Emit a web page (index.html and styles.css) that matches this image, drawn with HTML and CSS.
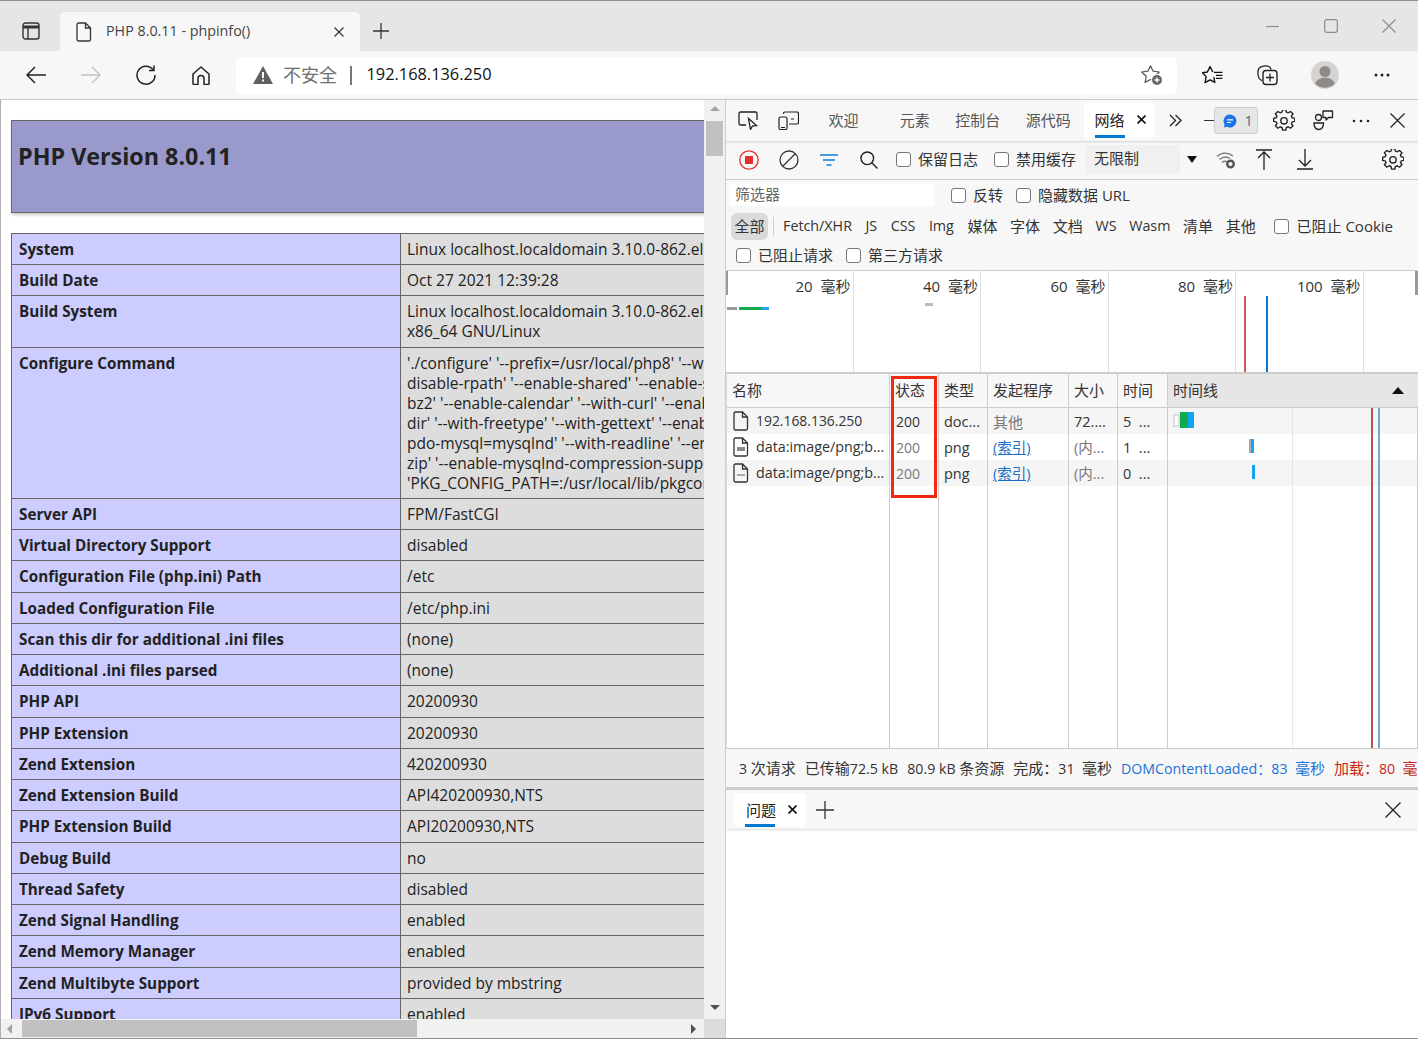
FILE: index.html
```html
<!DOCTYPE html>
<html lang="zh-CN">
<head>
<meta charset="utf-8">
<title>PHP 8.0.11 - phpinfo()</title>
<link rel="stylesheet" href="styles.css">
</head>
<body>
<svg class="defs" width="0" height="0">
  <symbol id="gear" viewBox="0 0 22 22"><path d="M9.2 1.2h3.6l.6 2.8 1.7.8 2.5-1.500 2.400 2.600-1.600 2.400.7 1.700 2.700.6v3.400l-2.700.6-.7 1.700 1.600 2.400-2.400 2.600-2.500-1.500-1.700.8-.6 2.800H9.200" transform="translate(0 -1.600) scale(1 .93)" fill="none" stroke="#222" stroke-width="1.400"/><path d="M9.200 1.200l-.6 2.800-1.700.8-2.500-1.500-2.400 2.600 1.600 2.400-.7 1.700-2.700.6v3.400l2.700.6.7 1.700-1.600 2.400 2.400 2.600 2.500-1.500 1.700.8.6 2.800" transform="translate(0.400 -1.600) scale(1 .93)" fill="none" stroke="#222" stroke-width="1.400"/><circle cx="11" cy="10.800" r="3.200" fill="none" stroke="#222" stroke-width="1.400"/></symbol>
  <symbol id="file" viewBox="0 0 16 20"><path d="M2.500 1h7l5 5v11.500a1.500 1.500 0 0 1-1.500 1.500H2.500A1.500 1.500 0 0 1 1 17.500V2.500A1.500 1.500 0 0 1 2.500 1zM9.500 1v5h5" fill="none" stroke="#333" stroke-width="1.300"/></symbol>
</svg>

<header class="tabstrip">
  <svg class="ico side" width="18" height="18" viewBox="0 0 18 18"><rect x="1" y="1" width="16" height="16" rx="2.500" fill="none" stroke="#333" stroke-width="1.400"/><path d="M1 5h16" stroke="#333" stroke-width="3"/><path d="M6 5v12" stroke="#333" stroke-width="1.400"/></svg>
  <div class="tab">
    <svg width="16" height="20" viewBox="0 0 16 20"><use href="#file"/></svg>
    <span class="tab-title">PHP 8.0.11 - phpinfo()</span>
    <svg class="tab-x" width="10" height="10" viewBox="0 0 10 10"><path d="M.5.500l9 9M9.500.500l-9 9" stroke="#333" stroke-width="1.200"/></svg>
  </div>
  <svg class="newtab" width="18" height="18" viewBox="0 0 18 18"><path d="M9 1v16M1 9h16" stroke="#333" stroke-width="1.300"/></svg>
  <div class="winctl">
    <svg width="14" height="14" viewBox="0 0 14 14"><path d="M0 7.500h13" stroke="#8c8c8c" stroke-width="1.200"/></svg>
    <svg width="14" height="14" viewBox="0 0 14 14"><rect x=".7" y=".7" width="12.600" height="12.600" rx="2" fill="none" stroke="#8c8c8c" stroke-width="1.200"/></svg>
    <svg width="14" height="14" viewBox="0 0 14 14"><path d="M.5.500l13 13M13.500.500l-13 13" stroke="#8c8c8c" stroke-width="1.200"/></svg>
  </div>
</header>

<nav class="toolbar">
  <svg class="tb back" width="20" height="18" viewBox="0 0 20 18"><path d="M20 9H1M9 1L1 9l8 8" fill="none" stroke="#222" stroke-width="1.500"/></svg>
  <svg class="tb fwd" width="20" height="18" viewBox="0 0 20 18"><path d="M0 9h19M11 1l8 8-8 8" fill="none" stroke="#c4c4c4" stroke-width="1.500"/></svg>
  <svg class="tb reload" width="20" height="20" viewBox="0 0 20 20"><path d="M17 4.500A9 9 0 1 0 19 10" fill="none" stroke="#222" stroke-width="1.500"/><path d="M18 .5v5h-5" fill="none" stroke="#222" stroke-width="1.500"/></svg>
  <svg class="tb home" width="18" height="19" viewBox="0 0 18 19"><path d="M9 1L1 8v9.500a1 1 0 0 0 1 1h4v-6a3 3 0 0 1 6 0v6h4a1 1 0 0 0 1-1V8z" fill="none" stroke="#222" stroke-width="1.500" stroke-linejoin="round"/></svg>
  <div class="addr">
    <svg width="20" height="18" viewBox="0 0 20 18"><path d="M10 0l10 18H0z" fill="#606060"/><path d="M9 6h2v6H9zM9 13.500h2v2H9z" fill="#fff"/></svg>
    <span class="insecure">不安全</span>
    <span class="sep"></span>
    <span class="url">192.168.136.250</span>
    <svg class="starplus" width="22" height="21" viewBox="0 0 22 21"><path d="M9.500.8l2.600 5.400 6.200.8-4.500 4.300 1.100 6.100-5.400-2.900-5.400 2.900 1.100-6.100L.7 7l6.200-.8z" fill="none" stroke="#555" stroke-width="1.200" stroke-linejoin="round"/><circle cx="16" cy="15" r="6" fill="#fff"/><circle cx="16" cy="15" r="5" fill="#666"/><path d="M16 12.500v5M13.500 15h5" stroke="#fff" stroke-width="1.400"/></svg>
  </div>
  <svg class="tb favs" width="21" height="20" viewBox="0 0 21 20"><path d="M10.800 7L8 1.500 5.400 7l-4.900.7 3.600 3.900-1 6 5-2.800 4.700 2.600-.9-5.200" fill="none" stroke="#111" stroke-width="1.400" stroke-linejoin="round"/><path d="M12 7.300h8.500M14 10.300h6.500M14 13.300h6.500" stroke="#111" stroke-width="1.200"/></svg>
  <svg class="tb coll" width="21" height="21" viewBox="0 0 21 21"><path d="M5 15.500C2.500 15 1.500 13 1 9.500.500 5 1 3 4 1.800 7 .8 10 .6 12 1.500c1.200.6 1.700 1.500 2 3" fill="none" stroke="#222" stroke-width="1.300"/><rect x="6" y="5.500" width="14" height="14" rx="3" fill="none" stroke="#222" stroke-width="1.400"/><path d="M13 8.500v8M9 12.500h8" stroke="#222" stroke-width="1.300"/></svg>
  <svg class="tb avatar" width="28" height="28" viewBox="0 0 28 28"><circle cx="14" cy="14" r="14" fill="#d6d4d2"/><circle cx="14" cy="10.500" r="5.500" fill="#8f8b86"/><path d="M4.500 23a9.500 6.500 0 0 1 19 0 14 14 0 0 1-19 0z" fill="#8f8b86"/></svg>
  <svg class="tb dots" width="16" height="4" viewBox="0 0 16 4"><circle cx="2" cy="2" r="1.500" fill="#222"/><circle cx="8" cy="2" r="1.500" fill="#222"/><circle cx="14" cy="2" r="1.500" fill="#222"/></svg>
</nav>

<main class="content">
  <section class="pane">
    <div class="pane-top">
      <div class="viewport">
        <div class="phpdoc">
          <div class="banner"><h1>PHP Version 8.0.11</h1></div>
          <table class="info">
            <tr><th>System</th><td>Linux localhost.localdomain 3.10.0-862.el7.x86_64 #1 SMP Fri Apr 20 16:44:24 UTC 2018</td></tr>
            <tr><th>Build Date</th><td>Oct 27 2021 12:39:28</td></tr>
            <tr><th>Build System</th><td>Linux localhost.localdomain 3.10.0-862.el7.x86_64 #1 SMP Fri Apr 20 16:44:24 UTC 2018<br>x86_64 GNU/Linux</td></tr>
            <tr><th>Configure Command</th><td>'./configure' '--prefix=/usr/local/php8' '--with-config-file-path=/etc' '--enable-fpm'<br>disable-rpath' '--enable-shared' '--enable-soap' '--with-libxml' '--with-openssl'<br>bz2' '--enable-calendar' '--with-curl' '--enable-gd' '--with-jpeg' '--with-zlib'<br>dir' '--with-freetype' '--with-gettext' '--enable-mbstring' '--with-mysqli=mysqlnd'<br>pdo-mysql=mysqlnd' '--with-readline' '--enable-shmop' '--enable-sockets' '--with-<br>zip' '--enable-mysqlnd-compression-support' '--with-pear' '--enable-opcache'<br>'PKG_CONFIG_PATH=:/usr/local/lib/pkgconfig'</td></tr>
            <tr><th>Server API</th><td>FPM/FastCGI</td></tr>
            <tr><th>Virtual Directory Support</th><td>disabled</td></tr>
            <tr><th>Configuration File (php.ini) Path</th><td>/etc</td></tr>
            <tr><th>Loaded Configuration File</th><td>/etc/php.ini</td></tr>
            <tr><th>Scan this dir for additional .ini files</th><td>(none)</td></tr>
            <tr><th>Additional .ini files parsed</th><td>(none)</td></tr>
            <tr><th>PHP API</th><td>20200930</td></tr>
            <tr><th>PHP Extension</th><td>20200930</td></tr>
            <tr><th>Zend Extension</th><td>420200930</td></tr>
            <tr><th>Zend Extension Build</th><td>API420200930,NTS</td></tr>
            <tr><th>PHP Extension Build</th><td>API20200930,NTS</td></tr>
            <tr><th>Debug Build</th><td>no</td></tr>
            <tr><th>Thread Safety</th><td>disabled</td></tr>
            <tr><th>Zend Signal Handling</th><td>enabled</td></tr>
            <tr><th>Zend Memory Manager</th><td>enabled</td></tr>
            <tr><th>Zend Multibyte Support</th><td>provided by mbstring</td></tr>
            <tr><th>IPv6 Support</th><td>enabled</td></tr>
          </table>
        </div>
      </div>
      <div class="vbar">
        <span class="arrow-up"></span>
        <span class="vthumb"></span>
        <span class="arrow-down"></span>
      </div>
    </div>
    <div class="hbar">
      <div class="htrack">
        <span class="arrow-left"></span>
        <span class="hthumb"></span>
        <span class="arrow-right"></span>
      </div>
      <span class="hcorner"></span>
    </div>
  </section>

  <section class="devtools">
    <div class="dt-tabs">
      <svg class="dt-ico inspect" width="21" height="19" viewBox="0 0 21 19"><path d="M8 14H2.500A1.500 1.500 0 0 1 1 12.500v-10A1.500 1.500 0 0 1 2.500 1h15A1.500 1.500 0 0 1 19 2.500V9" fill="none" stroke="#222" stroke-width="1.300"/><path d="M10.500 7.500l2 11 2-3.500 4-.5z" fill="none" stroke="#222" stroke-width="1.300"/></svg>
      <svg class="dt-ico device" width="21" height="19" viewBox="0 0 21 19"><path d="M5.500 3V2.500A1.500 1.500 0 0 1 7 1h12a1.500 1.500 0 0 1 1.500 1.500v9A1.500 1.500 0 0 1 19 13h-8" fill="none" stroke="#222" stroke-width="1.200"/><rect x="1" y="6" width="8" height="12.500" rx="1.500" fill="none" stroke="#222" stroke-width="1.200"/><path d="M3 16.500h4M13 8h3" stroke="#222" stroke-width="1.100"/></svg>
      <span class="dt-tab welcome">欢迎</span>
      <span class="dt-tab">元素</span>
      <span class="dt-tab">控制台</span>
      <span class="dt-tab">源代码</span>
      <span class="dt-tab-active"><span class="dt-active-label">网络</span><svg width="9" height="9" viewBox="0 0 9 9"><path d="M.5.500l8 8M8.500.500l-8 8" stroke="#111" stroke-width="1.600"/></svg></span>
      <svg class="more" width="13" height="13" viewBox="0 0 13 13"><path d="M1 1l5.500 5.500L1 12M6.500 1L12 6.500 6.500 12" fill="none" stroke="#222" stroke-width="1.300"/></svg>
      <span class="plus-cut"></span>
      <span class="badge"><svg width="14" height="14" viewBox="0 0 14 14"><path d="M7 .5a6.500 6.500 0 1 1-3 12.300L.8 13.500l.8-3A6.500 6.500 0 0 1 7 .5z" fill="#1a73e8"/><path d="M4 5.800h6M4 8.500h4" stroke="#fff" stroke-width="1.200"/></svg><span>1</span></span>
      <svg class="gear-top" width="22" height="22"><use href="#gear"/></svg>
      <svg class="feedback" width="21" height="21" viewBox="0 0 21 21"><circle cx="5.500" cy="7.500" r="3" fill="none" stroke="#222" stroke-width="1.300"/><path d="M1 13h9.500c.3 4-2 6.500-4.800 6.500S.8 17 1 13z" fill="none" stroke="#222" stroke-width="1.300"/><path d="M10 1h9.500v6.500h-4L13 10V7.500h-3z" fill="none" stroke="#222" stroke-width="1.300" stroke-linejoin="round"/></svg>
      <svg class="dt-dots" width="18" height="4" viewBox="0 0 18 4"><circle cx="2" cy="2" r="1.300" fill="#222"/><circle cx="9" cy="2" r="1.300" fill="#222"/><circle cx="16" cy="2" r="1.300" fill="#222"/></svg>
      <svg class="dt-close" width="15" height="15" viewBox="0 0 15 15"><path d="M.5.500l14 14M14.500.500l-14 14" stroke="#222" stroke-width="1.300"/></svg>
    </div>

    <div class="net-tools">
      <svg width="20" height="20" viewBox="0 0 20 20"><circle cx="10" cy="10" r="9.200" fill="none" stroke="#e0312c" stroke-width="1.300"/><rect x="6" y="6" width="8" height="8" fill="#e0312c"/></svg>
      <svg class="t-clear" width="20" height="20" viewBox="0 0 20 20"><circle cx="10" cy="10" r="9" fill="none" stroke="#333" stroke-width="1.300"/><path d="M3.500 16.500l13-13" stroke="#333" stroke-width="1.300"/></svg>
      <svg class="t-filter" width="18" height="12" viewBox="0 0 18 12"><path d="M0 1h18M3 6h12M6.500 11h5" stroke="#0f7fd8" stroke-width="1.400"/></svg>
      <svg class="t-search" width="18" height="18" viewBox="0 0 18 18"><circle cx="7.300" cy="7.300" r="6.300" fill="none" stroke="#222" stroke-width="1.400"/><path d="M12 12l5.500 5.500" stroke="#222" stroke-width="1.400"/></svg>
      <label class="chk t-keep"><i></i>保留日志</label>
      <label class="chk t-cache"><i></i>禁用缓存</label>
      <span class="select">无限制</span>
      <span class="tri"></span>
      <svg class="t-wifi" width="20" height="19" viewBox="0 0 20 19"><path d="M1 6.500C5.500 2 12 2 17 6M3.500 9.500C7 6.500 11 6.500 14 8.500M6 12.500c1.800-1.500 3.600-1.500 5-.5" fill="none" stroke="#777" stroke-width="1.300"/><circle cx="14.500" cy="14" r="3.300" fill="none" stroke="#555" stroke-width="2.400"/></svg>
      <svg class="t-up" width="16" height="21" viewBox="0 0 16 21"><path d="M0 1h16M8 21V3M2 9l6-6 6 6" fill="none" stroke="#222" stroke-width="1.300"/></svg>
      <svg class="t-down" width="16" height="21" viewBox="0 0 16 21"><path d="M0 20h16M8 0v17M2 11l6 6 6-6" fill="none" stroke="#222" stroke-width="1.300"/></svg>
      <svg class="t-gear" width="22" height="22"><use href="#gear"/></svg>
    </div>

    <div class="filters">
      <div class="f-row1">
        <span class="f-input">筛选器</span>
        <label class="chk f-inv"><i></i>反转</label>
        <label class="chk f-hide"><i></i>隐藏数据 URL</label>
      </div>
      <div class="f-row2">
        <span class="pill">全部</span>
        <span class="f-sep"></span>
        <span class="ft la">Fetch/XHR</span><span class="ft la">JS</span><span class="ft la">CSS</span><span class="ft la">Img</span><span class="ft">媒体</span><span class="ft">字体</span><span class="ft">文档</span><span class="ft lb">WS</span><span class="ft lb">Wasm</span><span class="ft">清单</span><span class="ft">其他</span>
        <label class="chk f-cookie"><i></i>已阻止 Cookie</label>
      </div>
      <div class="f-row3">
        <label class="chk"><i></i>已阻止请求</label>
        <label class="chk f-third"><i></i>第三方请求</label>
      </div>
    </div>

    <div class="overview">
      <div class="ov-cell">20&nbsp; 毫秒</div>
      <div class="ov-cell">40&nbsp; 毫秒</div>
      <div class="ov-cell">60&nbsp; 毫秒</div>
      <div class="ov-cell">80&nbsp; 毫秒</div>
      <div class="ov-cell">100&nbsp; 毫秒</div>
      <div class="ov-cell"></div>
      <span class="ov-edge"></span>
      <span class="ov-scroll"></span>
      <span class="ov-bar ov-a"></span>
      <span class="ov-bar ov-b"></span>
      <span class="ov-bar ov-c"></span>
      <span class="ov-bar ov-d"></span>
      <span class="ov-line ov-red"></span>
      <span class="ov-line ov-blue"></span>
    </div>

    <div class="net">
      <div class="nrow nhead">
        <div>名称</div><div>状态</div><div>类型</div><div>发起程序</div><div>大小</div><div>时间</div>
        <div class="sorted">时间线<span class="sort-tri"></span></div>
      </div>
      <div class="nrow stripe">
        <div class="name"><svg width="16" height="20"><use href="#file"/></svg><span class="ip">192.168.136.250</span></div><div class="num">200</div><div>doc...</div><div class="mute zh">其他</div><div>72....</div><div>5&nbsp; ...</div>
        <div class="wf"><span class="w w-a"></span><span class="w w-b"></span><span class="w w-c"></span></div>
      </div>
      <div class="nrow">
        <div class="name"><svg width="16" height="20"><use href="#file"/><rect x="4" y="10" width="8" height="4" fill="#888"/></svg><span>data:image/png;b...</span></div><div class="mute num">200</div><div>png</div><div><a class="lnk">(索引)</a></div><div class="mute">(内...</div><div>1&nbsp; ...</div>
        <div class="wf"><span class="w w-d"></span></div>
      </div>
      <div class="nrow stripe">
        <div class="name"><svg width="16" height="20"><use href="#file"/><rect x="4" y="11" width="8" height="2" fill="#aaa"/></svg><span>data:image/png;b...</span></div><div class="mute num">200</div><div>png</div><div><a class="lnk">(索引)</a></div><div class="mute">(内...</div><div>0&nbsp; ...</div>
        <div class="wf"><span class="w w-e"></span></div>
      </div>
      <div class="nrow nfill"><div></div><div></div><div></div><div></div><div></div><div></div><div></div></div>
      <span class="wf-grid"></span>
      <span class="wf-line wf-red"></span>
      <span class="wf-line wf-blue"></span>
      <span class="highlight"></span>
    </div>

    <div class="status">
      <span>3 <b>次请求</b></span><span><b>已传输</b>72.5 kB</span><span>80.9 kB <b>条资源</b></span><span><b>完成：</b>31&nbsp; <b>毫秒</b></span><span class="s-blue">DOMContentLoaded：83&nbsp; <b>毫秒</b></span><span class="s-red"><b>加载：</b>80&nbsp; <b>毫秒</b></span>
    </div>

    <div class="drawer">
      <span class="dr-tab"><span class="dr-label">问题</span><svg width="9" height="9" viewBox="0 0 9 9"><path d="M.5.500l8 8M8.500.500l-8 8" stroke="#111" stroke-width="1.600"/></svg></span>
      <svg class="dr-plus" width="18" height="18" viewBox="0 0 18 18"><path d="M9 0v18M0 9h18" stroke="#333" stroke-width="1.300"/></svg>
      <svg class="dr-close" width="16" height="16" viewBox="0 0 16 16"><path d="M.5.500l15 15M15.500.500l-15 15" stroke="#222" stroke-width="1.300"/></svg>
    </div>
    <div class="drawer-body"></div>
  </section>
</main>
</body>
</html>
```
FILE: styles.css
```css
* { box-sizing: border-box; }
html, body { margin: 0; height: 100%; overflow: hidden; }
body {
  width: 1418px; height: 1039px;
  display: flex; flex-direction: column;
  font-family: "Open Sans", "Noto Sans CJK SC", sans-serif;
  color: #222; background: #fff;
  border-top: 1px solid #8e8e8e;
  border-bottom: 1px solid #8e8e8e;
}
.defs { position: absolute; }
svg { display: block; flex: none; }

/* tab strip */
.tabstrip { height: 50px; flex: none; background: #e6e6e6; display: flex; align-items: flex-end; padding-left: 22px; }
.side { margin-bottom: 11px; }
.tab { width: 300px; height: 39px; margin-left: 20px; background: #f7f7f7; border-radius: 5px 5px 0 0; display: flex; align-items: center; padding: 0 16px 0 16px; }
.tab-title { margin-left: 14px; font-size: 14.300px; color: #444; flex: 1; white-space: nowrap; padding-bottom: 2px; }
.newtab { margin: 0 0 11px 12px; }
.winctl { margin-left: auto; display: flex; gap: 44px; padding-right: 22px; margin-bottom: 12px; align-self: flex-start; margin-top: 18px; }

/* toolbar */
.toolbar { height: 49px; flex: none; background: #f7f7f7; border-bottom: 1px solid #c8c8c8; display: flex; align-items: center; padding-left: 26px; }
.fwd { margin-left: 35px; }
.reload { margin-left: 35px; }
.home { margin-left: 36px; }
.addr { width: 941px; height: 37px; margin-left: 26px; background: #fff; border-radius: 5px; display: flex; align-items: center; padding: 0 14px 0 17px; }
.insecure { margin-left: 10px; font-size: 18px; color: #6e6e6e; padding-bottom: 2px; }
.sep { width: 1.500px; height: 19px; background: #777; margin: 0 15px 0 13px; }
.url { font-size: 16.350px; color: #111; flex: 1; padding-bottom: 2px; }
.favs { margin-left: 25px; }
.coll { margin-left: 34px; }
.avatar { margin-left: 33px; }
.dots { margin-left: 35px; }

/* main split */
.content { flex: 1; min-height: 0; display: flex; }
.pane { width: 726px; flex: none; display: flex; flex-direction: column; border-right: 1px solid #ccc; border-left: 1px solid #b0b0b0; }
.pane-top { flex: 1; min-height: 0; display: flex; }
.viewport { flex: 1; min-width: 0; overflow: hidden; }
.phpdoc { width: 1190px; padding: 20px 0 0 10px; }
.banner { height: 93px; background: #99c; border: 1px solid #666; box-shadow: 1px 2px 3px #ccc; padding: 17px 6px 0; }
.banner h1 { margin: 0; font-size: 23.300px; line-height: 36px; font-weight: 700; color: #222; }
.info { width: 100%; margin-top: 19.800px; border-collapse: collapse; table-layout: fixed; font-size: 15.500px; line-height: 20px; }
.info th, .info td { border: 1px solid #666; padding: 5.125px 7px; vertical-align: top; text-align: left; white-space: nowrap; overflow: hidden; }
.info th { width: 389px; background: #ccf; font-weight: 700; font-size: 15.250px; }
.info td { background: #ddd; padding-left: 6px; }

/* page scrollbars */
.vbar { width: 21px; flex: none; background: #f1f1f1; position: relative; display: flex; flex-direction: column; align-items: center; }
.arrow-up { width: 0; height: 0; border: 5px solid transparent; border-top: 0; border-bottom: 5px solid #a3a3a3; margin-top: 6px; }
.vthumb { width: 17px; height: 35px; background: #c1c1c1; margin-top: 10px; }
.arrow-down { width: 0; height: 0; border: 5px solid transparent; border-bottom: 0; border-top: 5px solid #505050; margin-top: auto; margin-bottom: 9px; }
.hbar { height: 19px; flex: none; display: flex; }
.htrack { flex: 1; min-width: 0; background: #f1f1f1; display: flex; align-items: center; padding: 0 8px 0 6px; }
.hcorner { width: 21px; flex: none; background: #dcdcdc; }
.arrow-left { width: 0; height: 0; border: 5px solid transparent; border-left: 0; border-right: 5px solid #a3a3a3; }
.hthumb { width: 395px; height: 17px; background: #c1c1c1; margin-left: 10px; }
.arrow-right { width: 0; height: 0; border: 5px solid transparent; border-right: 0; border-left: 5px solid #505050; margin-left: auto; }

/* devtools */
.devtools { flex: 1; min-width: 0; display: flex; flex-direction: column; font-size: 15px; overflow: hidden; position: relative; }
.dt-tabs { height: 41px; flex: none; background: #f7f7f7; box-shadow: 0 1px 2px rgba(0,0,0,.15); display: flex; align-items: center; padding-left: 12px; position: relative; z-index: 1; color: #555; }
.device { margin-left: 19px; }
.dt-tab { padding: 0 12.750px 3px; white-space: nowrap; }
.welcome { margin: 0 16px 0 17px; padding-left: 12.500px; padding-right: 12.500px; }
.dt-tab-active { width: 71px; height: 35px; background: #fff; border-radius: 3px; position: relative; display: flex; align-items: center; padding: 0 0 3px 11px; color: #222; align-self: flex-end; margin-bottom: 3px; }
.dt-active-label { width: 42px; }
.dt-tab-active::after { content: ""; position: absolute; left: 11px; width: 30px; height: 3px; bottom: 0; background: #0078d4; }
.more { margin-left: 14px; }
.plus-cut { width: 10px; height: 1.500px; margin-left: 22px; background: #333; }
.badge { width: 44px; height: 27px; background: #e6e6e6; border: 1px solid #ccc; border-radius: 3px; display: flex; align-items: center; padding-left: 8px; gap: 8px; color: #4a6a8a; font-size: 14.500px; }
.gear-top { margin-left: 15px; }
.feedback { margin-left: 18px; }
.dt-dots { margin-left: 18px; }
.dt-close { margin-left: 20px; }

.net-tools { height: 39px; flex: none; background: #f7f7f7; border-bottom: 1px solid #ccc; display: flex; align-items: center; padding: 0 0 1px 13px; }
.t-clear { margin-left: 20px; }
.t-filter { margin-left: 21px; }
.t-search { margin-left: 22px; }
.chk { display: inline-flex; align-items: center; white-space: nowrap; color: #333; padding-bottom: 2px; }
.chk i { width: 15px; height: 15px; border: 1px solid #777; border-radius: 3px; background: #fff; margin: 2px 7px 0 0; flex: none; }
.t-keep { margin-left: 18px; }
.t-cache { margin-left: 16px; }
.select { width: 94px; height: 29px; margin-left: 10px; background: #f0f0f0; border-radius: 3px; padding-left: 8px; line-height: 27px; color: #333; }
.tri { width: 0; height: 0; border: 5px solid transparent; border-bottom: 0; border-top: 7px solid #111; margin-left: 7px; }
.t-wifi { margin-left: 19px; }
.t-up { margin-left: 20px; }
.t-down { margin-left: 25px; }
.t-gear { margin-left: 69px; }

.filters { height: 91px; flex: none; background: #f7f7f7; border-bottom: 1px solid #ccc; color: #333; }
.f-row1 { height: 30px; display: flex; align-items: center; padding-left: 3px; }
.f-input { width: 205px; height: 22px; background: #fff; padding-left: 6px; line-height: 21px; color: #666; }
.f-inv { margin-left: 17px; }
.f-hide { margin-left: 13px; }
.f-row2 { height: 32px; display: flex; align-items: center; padding-left: 5px; }
.pill { width: 37px; height: 27px; background: #dadada; border-radius: 6px; text-align: center; line-height: 26px; }
.f-sep { width: 1px; height: 19px; background: #ccc; margin: 0 9px 0 5px; }
.ft { margin-right: 12.700px; white-space: nowrap; padding-bottom: 2px; }
.ft.la { font-size: 14.300px; margin-right: 13.500px; }
.ft.lb { font-size: 14.300px; }
.f-cookie { margin-left: 5px; }
.f-cookie i { margin-right: 8px; }
.f-row3 { height: 26px; display: flex; align-items: center; padding-left: 10px; }
.f-third { margin-left: 13px; }

.overview { height: 101px; flex: none; background: #fff; display: grid; grid-template-columns: repeat(6, 127.500px); position: relative; }
.ov-cell { border-right: 1px solid #e0e0e0; text-align: right; padding: 4px 2px 0 0; color: #333; white-space: nowrap; line-height: 22px; }
.ov-edge { position: absolute; left: 0; top: 0; width: 2px; height: 24px; background: #999; }
.ov-scroll { position: absolute; right: 0; top: 0; width: 3px; height: 24px; background: #999; }
.ov-bar { position: absolute; height: 3px; }
.ov-a { left: 1px; width: 10px; top: 36px; background: #999; }
.ov-b { left: 13px; width: 23px; top: 36px; background: #0eac4e; }
.ov-c { left: 36px; width: 7px; top: 36px; background: #1ea7f0; }
.ov-d { left: 199px; width: 8px; top: 32px; background: #bbb; }
.ov-line { position: absolute; top: 25px; bottom: 0; width: 2px; }
.ov-red { left: 518px; background: #d05454; }
.ov-blue { left: 540px; background: #0a74d6; }

.net { flex: 1; min-height: 0; display: flex; flex-direction: column; position: relative; border-top: 2px solid #ccc; border-left: 1px solid #ddd; }
.nrow { display: grid; grid-template-columns: 163px 49px 49px 81px 49px 50px 1fr; height: 26px; flex: none; align-items: stretch; font-size: 14.500px; }
.nrow > div { border-right: 1px solid #ccc; padding: 1px 5px 0; line-height: 26px; white-space: nowrap; overflow: hidden; color: #333; }
.nhead { height: 34px; background: #f7f7f7; border-bottom: 1px solid #ccc; font-size: 15px; }
.nhead > div { line-height: 32px; color: #333; padding-top: 0; }
.nhead .sorted { background: #e6e6e6; display: flex; justify-content: space-between; align-items: center; border-right: 0; padding-bottom: 2px; }
.sort-tri { width: 0; height: 0; border: 6px solid transparent; border-top: 0; border-bottom: 7px solid #111; margin: 2px 9px 0 0; }
.stripe { background: #f5f5f5; }
.nrow .name { display: flex; align-items: center; gap: 7px; padding: 0 0 0 6px; font-size: 14.300px; }
.nrow .ip { font-size: 13.900px; }
.nrow > .num { font-size: 14px; padding-left: 6px; }
.nrow > .zh { font-size: 15px; }
.nrow > .mute { color: #777; }
.lnk { color: #1a6fc4; text-decoration: underline; }
.wf { position: relative; }
.w { position: absolute; }
.w-a { left: 5px; top: 6px; width: 7px; height: 13px; border: 2px solid #ddd; background: #fff; }
.w-b { left: 12px; top: 4px; width: 9px; height: 16px; background: #0eac4e; }
.w-c { left: 20px; top: 4px; width: 6px; height: 16px; background: #12a5f4; }
.w-d { left: 81px; top: 5px; width: 5px; height: 14px; background: #12a5f4; border-left: 2px solid #aaa; }
.w-e { left: 84px; top: 5px; width: 3px; height: 14px; background: #12a5f4; }
.nfill { flex: 1; height: auto; }
.wf-grid { position: absolute; left: 565px; top: 34px; bottom: 0; width: 1px; background: #e6e6e6; }
.wf-line { position: absolute; top: 34px; bottom: 0; width: 2px; }
.wf-red { left: 644px; background: #c05050; }
.wf-blue { left: 651px; background: #6fa6e0; }
.highlight { position: absolute; left: 164px; top: 2px; width: 46px; height: 122px; border: 3px solid #f02a10; }

.status { height: 42px; flex: none; background: #f7f7f7; border-top: 1px solid #ccc; border-bottom: 3px solid #ccd0d4; display: flex; align-items: center; gap: 9px; padding: 0 0 2px 13px; white-space: nowrap; color: #333; font-size: 14.200px; }
.status b { font-weight: 400; font-size: 15px; }
.s-blue { color: #1a73d8; }
.s-red { color: #c8281c; }

.drawer { height: 39px; flex: none; background: #f7f7f7; display: flex; align-items: center; box-shadow: 0 1px 2px rgba(0,0,0,.15); padding-left: 8px; position: relative; z-index: 1; }
.dr-tab { width: 72px; height: 34px; background: #fff; border-radius: 3px; position: relative; display: flex; align-items: center; padding-left: 12px; }
.dr-label { width: 42px; }
.dr-tab::after { content: ""; position: absolute; left: 11px; bottom: 0; width: 30px; height: 3px; background: #0078d4; }
.dr-plus { margin-left: 10px; }
.dr-close { margin-left: auto; margin-right: 17px; }
.drawer-body { height: 209px; flex: none; background: #fff; }
```
